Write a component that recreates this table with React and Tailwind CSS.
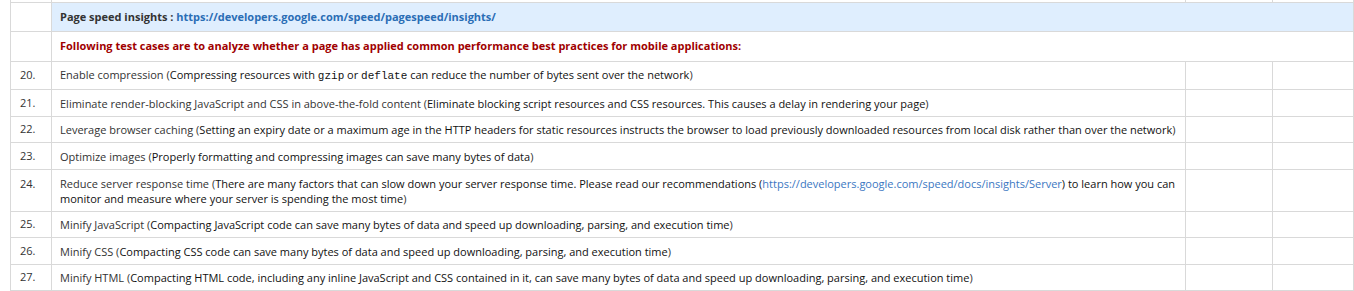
const ROWS = [
  {
    no: '20.',
    h: 'h-[28px]',
    title: 'Enable compression',
    body: (
      <>
        Compressing resources with <code className="font-['Liberation_Mono',monospace] text-[11px]">gzip</code> or{' '}
        <code className="font-['Liberation_Mono',monospace] text-[11px]">deflate</code> can reduce the number of bytes sent over the network
      </>
    ),
  },
  {
    no: '21.',
    h: 'h-[27px]',
    title: 'Eliminate render-blocking JavaScript and CSS in above-the-fold content',
    body: 'Eliminate blocking script resources and CSS resources. This causes a delay in rendering your page',
  },
  {
    no: '22.',
    h: 'h-[26px]',
    title: 'Leverage browser caching',
    body: 'Setting an expiry date or a maximum age in the HTTP headers for static resources instructs the browser to load previously downloaded resources from local disk rather than over the network',
  },
  {
    no: '23.',
    h: 'h-[27px]',
    title: 'Optimize images',
    body: 'Properly formatting and compressing images can save many bytes of data',
  },
  {
    no: '24.',
    h: 'h-[42px]',
    top: true,
    title: 'Reduce server response time',
    body: (
      <>
        There are many factors that can slow down your server response time. Please read our recommendations (
        <a className="text-[#3b77c2]">https://developers.google.com/speed/docs/insights/Server</a>) to learn how you can
        <br />
        monitor and measure where your server is spending the most time
      </>
    ),
  },
  {
    no: '25.',
    h: 'h-[26px]',
    title: 'Minify JavaScript',
    body: 'Compacting JavaScript code can save many bytes of data and speed up downloading, parsing, and execution time',
  },
  {
    no: '26.',
    h: 'h-[27px]',
    title: 'Minify CSS',
    body: 'Compacting CSS code can save many bytes of data and speed up downloading, parsing, and execution time',
  },
  {
    no: '27.',
    h: 'h-[26px]',
    title: 'Minify HTML',
    body: 'Compacting HTML code, including any inline JavaScript and CSS contained in it, can save many bytes of data and speed up downloading, parsing, and execution time',
  },
];

const Row = ({ no, h, top, title, body }) => (
  <div className={`flex border-b border-[#d9d9d9] ${h}`}>
    <div className={`w-[41px] shrink-0 border-r border-[#d9d9d9] pl-[9px] text-[#333] flex ${top ? 'items-start pt-[6px]' : 'items-center'}`}>
      {no}
    </div>
    <div className={`w-[1134px] shrink-0 border-r border-[#d9d9d9] pl-[8px] pr-[4px] flex ${top ? 'items-start pt-[6px]' : 'items-center'}`}>
      <p className="leading-[15px] whitespace-nowrap">
        <span className="text-[#333]">{title} (</span>
        <span className="text-[#111]">{body}</span>
        <span className="text-[#333]">)</span>
      </p>
    </div>
    <div className="w-[87px] shrink-0 border-r border-[#d9d9d9]" />
    <div className="w-[80px] shrink-0" />
  </div>
);

export default function App() {
  return (
    <div className="bg-white w-[1354px] h-[291px] overflow-hidden font-['Open_Sans',sans-serif] text-[11px]">
      <div className="ml-[10px] w-[1344px] border-l border-r border-[#d9d9d9]">
        {/* tail of the previous row */}
        <div className="flex h-[3px] border-b border-[#d9d9d9]">
          <div className="w-[41px] shrink-0 border-r border-[#d9d9d9]" />
          <div className="w-[1134px] shrink-0 border-r border-[#d9d9d9]" />
          <div className="w-[87px] shrink-0 border-r border-[#d9d9d9]" />
          <div className="w-[80px] shrink-0" />
        </div>

        <div className="flex h-[29px] border-b border-[#d9d9d9]">
          <div className="w-[41px] shrink-0 border-r border-[#d9d9d9]" />
          <div className="flex-1 bg-[#dfeefe] pl-[8px] flex items-center font-bold">
            <span className="text-[#333]">Page speed insights :&nbsp;</span>
            <a className="text-[#2a6db5]">https://developers.google.com/speed/pagespeed/insights/</a>
          </div>
        </div>

        <div className="flex h-[30px] border-b border-[#d9d9d9]">
          <div className="w-[41px] shrink-0 border-r border-[#d9d9d9]" />
          <div className="flex-1 pl-[8px] flex items-center font-bold text-[#a00000]">
            Following test cases are to analyze whether a page has applied common performance best practices for mobile applications:
          </div>
        </div>

        {ROWS.map((r) => (
          <Row key={r.no} {...r} />
        ))}
      </div>
    </div>
  );
}
